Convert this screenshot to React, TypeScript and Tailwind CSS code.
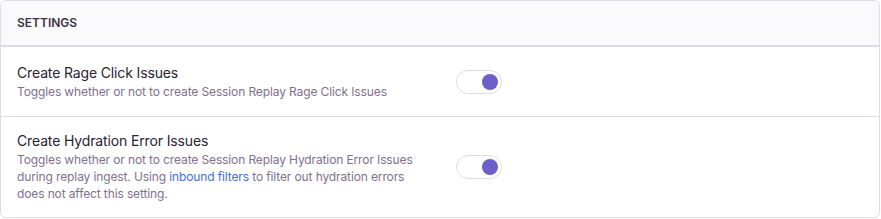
import { useState } from "react";

type Setting = {
  id: string;
  label: string;
  help: React.ReactNode;
  defaultOn: boolean;
};

const SETTINGS: Setting[] = [
  {
    id: "rage-click",
    label: "Create Rage Click Issues",
    help: "Toggles whether or not to create Session Replay Rage Click Issues",
    defaultOn: true,
  },
  {
    id: "hydration-error",
    label: "Create Hydration Error Issues",
    help: (
      <>
        Toggles whether or not to create Session Replay Hydration Error Issues
        during replay ingest. Using{" "}
        <a href="#" className="text-[#3d74db]">
          inbound filters
        </a>{" "}
        to filter out hydration errors does not affect this setting.
      </>
    ),
    defaultOn: true,
  },
];

function Switch({ on, onToggle }: { on: boolean; onToggle: () => void }) {
  return (
    <button
      type="button"
      role="switch"
      aria-checked={on}
      onClick={onToggle}
      className={`flex h-6 w-[46px] shrink-0 items-center rounded-full border border-[#e0dce5] bg-white px-[3px] ${
        on ? "justify-end" : "justify-start"
      }`}
    >
      <span
        className={`h-4 w-4 rounded-full ${on ? "bg-[#6c5fc7]" : "bg-[#e0dce5]"}`}
      />
    </button>
  );
}

function SettingRow({ setting }: { setting: Setting }) {
  const [on, setOn] = useState(setting.defaultOn);
  return (
    <div className="flex items-center border-t border-[#e0dce5] first:border-t-0">
      <div className="w-1/2 px-4 pt-[14px] pb-[15px]">
        <div className="text-[14px] leading-5 tracking-[-0.01em] text-[#2b2233]">
          {setting.label}
        </div>
        <div className="text-[12px] leading-[17px] tracking-[-0.01em] text-[#80708f]">
          {setting.help}
        </div>
      </div>
      <div className="w-1/2 px-4 py-[22.5px]">
        <Switch on={on} onToggle={() => setOn((v) => !v)} />
      </div>
    </div>
  );
}

export default function App() {
  return (
    <div className="bg-white font-['Inter',sans-serif]">
      <section className="w-[880px] overflow-hidden rounded-md border border-[#e0dce5] bg-white shadow-[0_1px_1px_rgba(43,34,51,0.04)]">
        <header className="border-b border-[#e0dce5] bg-[#faf9fb] px-4 py-[14px]">
          <h2 className="text-[12px] font-semibold uppercase leading-4 text-[#3e3446]">
            Settings
          </h2>
        </header>
        {SETTINGS.map((s) => (
          <SettingRow key={s.id} setting={s} />
        ))}
      </section>
    </div>
  );
}
